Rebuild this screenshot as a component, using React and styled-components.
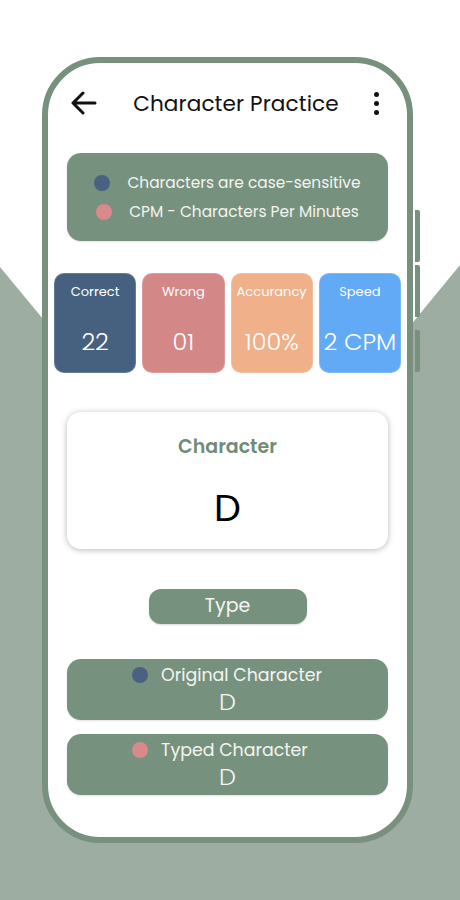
import React from 'react'
import styled, { createGlobalStyle } from 'styled-components'

const GlobalStyle = createGlobalStyle`
  html, body { margin: 0; padding: 0; }
  body { font-family: 'Poppins', 'Open Sans', sans-serif; }
  * { box-sizing: border-box; }
`

const SAGE = '#77917f'
const FRAME = '#78917f'
const LIGHT = '#f4f4f0'

const Page = styled.div`
  position: relative;
  width: 460px;
  height: 900px;
  overflow: hidden;
  background: #fff;
  padding-top: 57px;
  &::before {
    content: '';
    position: absolute;
    inset: 0;
    background: #9eada1;
    clip-path: polygon(0 267px, 230px 545px, 460px 265px, 460px 900px, 0 900px);
  }
`

const Phone = styled.div`
  position: relative;
  z-index: 1;
  width: 371px;
  height: 786px;
  margin-left: 42px;
  border: 6px solid ${FRAME};
  border-radius: 58px;
  background: #fff;
  display: flex;
  flex-direction: column;
`

const SideKey = styled.span`
  position: absolute;
  left: calc(100% + 8px);
  top: ${p => p.top}px;
  width: 5px;
  height: ${p => p.h}px;
  background: ${FRAME};
  border-radius: 0 2px 2px 0;
`

const Header = styled.div`
  display: flex;
  align-items: center;
  justify-content: space-between;
  height: 28px;
  margin-top: 26px;
  padding: 0 28px 0 22px;
`

const Title = styled.h1`
  margin: 0;
  font-size: 21.6px;
  font-weight: 400;
  color: #111;
  letter-spacing: 0.1px;
`

const Kebab = styled.div`
  display: flex;
  flex-direction: column;
  gap: 4px;
  span {
    width: 5px;
    height: 5px;
    border-radius: 50%;
    background: #111;
  }
`

const Body = styled.div`
  padding: 0 19px;
  display: flex;
  flex-direction: column;
`

const InfoCard = styled.div`
  margin-top: 36px;
  height: 88px;
  padding: 15px 0 14px;
  background: ${SAGE};
  border-radius: 14px;
  box-shadow: 0 1px 2px rgba(0, 0, 0, 0.12);
`

const InfoRow = styled.div`
  height: 29px;
  display: flex;
  align-items: center;
  justify-content: center;
  gap: 17px;
  color: ${LIGHT};
  font-size: 15.4px;
`

const Dot = styled.span`
  width: 16px;
  height: 16px;
  border-radius: 50%;
  flex: none;
  background: ${p => p.color};
`

const Stats = styled.div`
  margin: 32px -13px 0 -13px;
  display: grid;
  grid-template-columns: repeat(4, 1fr);
  gap: 6px;
`

const Stat = styled.div`
  height: 100px;
  border-radius: 10px;
  background: ${p => p.bg};
  border: 1px solid rgba(255, 255, 255, 0.18);
  display: flex;
  flex-direction: column;
  align-items: center;
  padding-top: 9px;
  color: #fff;
`

const StatLabel = styled.div`
  font-size: 13px;
  line-height: 18px;
`

const StatValue = styled.div`
  margin-top: 26px;
  font-size: 24px;
  line-height: 30px;
  font-weight: 300;
  white-space: nowrap;
`

const CharCard = styled.div`
  margin-top: 39px;
  height: 137px;
  border-radius: 14px;
  background: #fff;
  box-shadow: 0 1px 6px rgba(0, 0, 0, 0.28);
  display: flex;
  flex-direction: column;
  align-items: center;
  padding-top: 22px;
`

const CharTitle = styled.div`
  font-size: 19px;
  line-height: 26px;
  font-weight: 600;
  color: #6f8c78;
`

const CharValue = styled.div`
  margin-top: 24px;
  font-size: 38px;
  line-height: 48px;
  color: #000;
`

const TypeButton = styled.button`
  align-self: center;
  margin-top: 40px;
  width: 158px;
  height: 35px;
  border: none;
  border-radius: 12px;
  background: ${SAGE};
  box-shadow: 0 1px 2px rgba(0, 0, 0, 0.15);
  color: ${LIGHT};
  font-family: inherit;
  font-size: 19px;
  padding: 0 0 2px;
`

const ResultCard = styled.div`
  margin-top: ${p => p.gap}px;
  height: 61px;
  border-radius: 14px;
  background: ${SAGE};
  box-shadow: 0 1px 2px rgba(0, 0, 0, 0.12);
  padding: 4px 0 0 65px;
  color: ${LIGHT};
`

const ResultLabel = styled.div`
  display: flex;
  align-items: center;
  gap: 13px;
  height: 24px;
  font-size: 17.4px;
`

const ResultValue = styled.div`
  margin-top: 1px;
  padding-right: 65px;
  text-align: center;
  font-size: 24px;
  line-height: 27px;
  font-weight: 300;
`

const BackArrow = () => (
  <svg width="28" height="24" viewBox="0 0 28 24" fill="none" stroke="#111" strokeWidth="3" strokeLinecap="round" strokeLinejoin="round">
    <path d="M25 12H3M13 2L3 12l10 10" />
  </svg>
)

const stats = [
  { label: 'Correct', value: '22', bg: '#46607f' },
  { label: 'Wrong', value: '01', bg: '#d48787' },
  { label: 'Accurancy', value: '100%', bg: '#f0b08a' },
  { label: 'Speed', value: '2 CPM', bg: '#62aaf6' },
]

export default function App() {
  return (
    <Page>
      <GlobalStyle />
      <Phone>
        <SideKey top={147} h={52} />
        <SideKey top={202} h={52} />
        <SideKey top={267} h={42} />
        <Header>
          <BackArrow />
          <Title>Character Practice</Title>
          <Kebab>
            <span />
            <span />
            <span />
          </Kebab>
        </Header>
        <Body>
          <InfoCard>
            <InfoRow>
              <Dot color="#4a6182" />
              Characters are case-sensitive
            </InfoRow>
            <InfoRow>
              <Dot color="#d88a8a" />
              CPM - Characters Per Minutes
            </InfoRow>
          </InfoCard>
          <Stats>
            {stats.map(s => (
              <Stat key={s.label} bg={s.bg}>
                <StatLabel>{s.label}</StatLabel>
                <StatValue>{s.value}</StatValue>
              </Stat>
            ))}
          </Stats>
          <CharCard>
            <CharTitle>Character</CharTitle>
            <CharValue>D</CharValue>
          </CharCard>
          <TypeButton>Type</TypeButton>
          <ResultCard gap={35}>
            <ResultLabel>
              <Dot color="#4a6182" />
              Original Character
            </ResultLabel>
            <ResultValue>D</ResultValue>
          </ResultCard>
          <ResultCard gap={14}>
            <ResultLabel>
              <Dot color="#d88a8a" />
              Typed Character
            </ResultLabel>
            <ResultValue>D</ResultValue>
          </ResultCard>
        </Body>
      </Phone>
    </Page>
  )
}
